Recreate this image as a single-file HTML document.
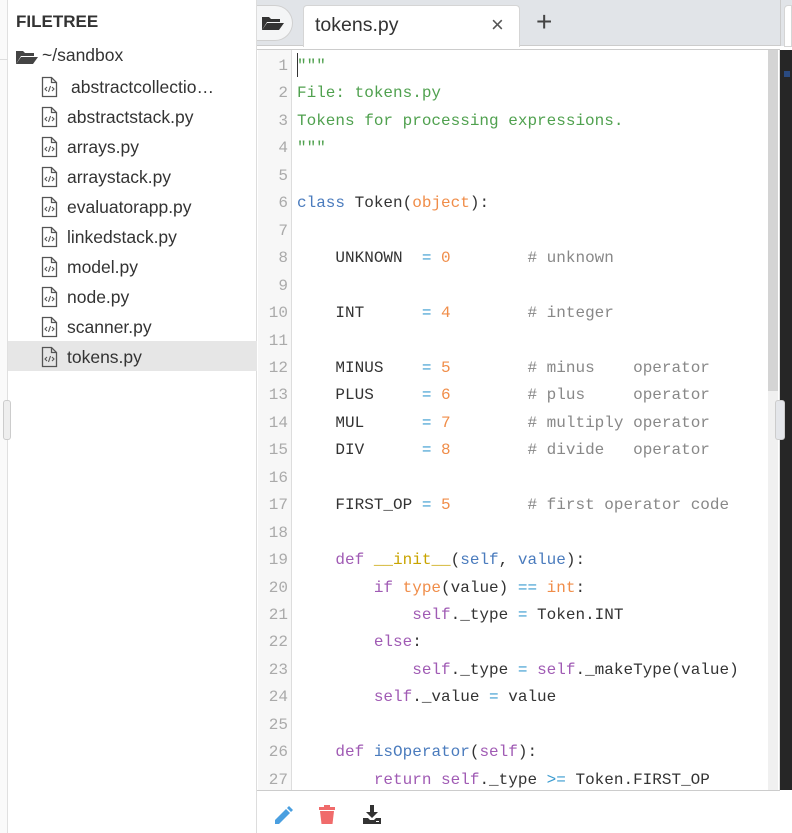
<!DOCTYPE html>
<html><head><meta charset="utf-8">
<style>
*{margin:0;padding:0;box-sizing:border-box}
body{width:792px;height:833px;overflow:hidden;background:#fff;font-family:"Liberation Sans",sans-serif;position:relative}
.abs{position:absolute}
#side{left:0;top:0;width:257px;height:833px;background:#fff;border-right:1px solid #ddd}
#leftstrip{left:0;top:0;width:8px;height:833px;background:#fafafa;border-right:1px solid #e0e0e0}
.ft{left:16px;top:12px;font-weight:bold;font-size:17px;color:#333}
.row{left:8px;width:249px;height:30px;font-size:17.5px;color:#333;line-height:30px}
.row svg{position:absolute;left:33px;top:4px}
.row span{position:absolute;left:59px}
#tabbar{left:257px;top:0;width:523px;height:46px;background:#e1e4e8;border-bottom:1px solid #ccc}
.ln{position:absolute;left:258px;width:30px;text-align:right;color:#aaa;font-family:"Liberation Mono",monospace;font-size:16px;line-height:27.45px}
.cl{position:absolute;left:297px;white-space:pre;color:#333;font-family:"Liberation Mono",monospace;font-size:16px;line-height:27.45px}
.s{color:#50a14f}.k{color:#4a7bbd}.o{color:#f08d49}.c{color:#888}.p{color:#3a9bd0}.v{color:#a05bb4}.f{color:#c9a400}
</style></head><body>
<div class="abs" id="side"></div>
<div class="abs" id="leftstrip"></div>
<div class="abs" style="left:0;top:59px;width:8px;height:1px;background:#ddd"></div>
<div class="abs" style="left:3px;top:400px;width:8px;height:40px;border:1px solid #ccc;border-radius:3px;background:#eee"></div>
<div class="abs ft">FILETREE</div>
<svg class="abs" style="left:16px;top:49px" width="22" height="16" viewBox="0 0 22 16"><path d="M0 2h7l2 2h9v3H5L0 15z" fill="#444"/><path d="M5 8h17l-5 7H0z" fill="#444"/></svg>
<div class="abs" style="left:42px;top:45px;font-size:17.5px;color:#333">~/sandbox</div>
<div id="rows"></div>
<div class="abs" style="left:8px;top:341px;width:249px;height:30px;background:#e6e6e6"></div>
<script>
var files=["abstractcollectio…","abstractstack.py","arrays.py","arraystack.py","evaluatorapp.py","linkedstack.py","model.py","node.py","scanner.py","tokens.py"];
var h="";
files.forEach(function(f,i){var t=72+i*30;
h+='<div class="abs row" style="top:'+t+'px;z-index:2"><svg width="17" height="22" viewBox="0 0 17 22"><path d="M1.5 1.5h9l5 5v14h-14z" fill="none" stroke="#555" stroke-width="1.3"/><path d="M10.5 1.5v5h5" fill="none" stroke="#555" stroke-width="1.3"/><path d="M6 11l-2 2 2 2M11 11l2 2-2 2M9.5 10l-2 6" fill="none" stroke="#555" stroke-width="1.1"/></svg><span'+(i==0?' style="left:63px"':'')+'>'+f+'</span></div>';});
document.getElementById("rows").innerHTML=h;
</script>
<div class="abs" id="tabbar"></div>
<div class="abs" style="left:257px;top:5px;width:36px;height:36px;border-radius:0 18px 18px 0;background:#f4f5f6;border:1px solid #d0d0d0;border-left:none"></div>
<svg class="abs" style="left:262px;top:16px" width="22" height="15" viewBox="0 0 22 15"><path d="M0 1h7l2 2h9v3H5L0 14z" fill="#333"/><path d="M5 7h17l-5 7H0z" fill="#333"/></svg>
<div class="abs" style="left:303px;top:5px;width:217px;height:42px;background:#fff;border:1px solid #d5d5d5;border-bottom:none;border-radius:4px 4px 0 0"></div>
<div class="abs" style="left:315px;top:14px;font-size:19.5px;color:#333">tokens.py</div>
<div class="abs" style="left:491px;top:12px;font-size:22px;color:#555">×</div>
<div class="abs" style="left:536px;top:6px;font-size:28px;color:#444;font-weight:300">+</div>
<div class="abs" style="left:780px;top:0;width:12px;height:46px;background:#e1e4e8;border-left:1px solid #ccc"></div>
<div class="abs" style="left:784px;top:5px;width:8px;height:42px;background:#fff;border:1px solid #d5d5d5;border-radius:4px 0 0 0"></div>
<div class="abs" style="left:257px;top:49px;width:523px;height:741px;border-top:1px solid #ccc"></div>
<div class="abs" style="left:258px;top:50px;width:34px;height:740px;background:#f7f7f7;border-right:1px solid #ddd"></div>
<div class="abs" style="left:768px;top:50px;width:10px;height:740px;background:#f0f0f0"></div>
<div class="abs" style="left:768px;top:50px;width:10px;height:341px;background:#d4d4d4"></div>
<div class="abs" style="left:779px;top:50px;width:1px;height:783px;background:#ddd"></div>
<div class="abs" style="left:780px;top:50px;width:12px;height:740px;background:#262626"></div>
<div class="abs" style="left:784px;top:71px;width:6px;height:6px;background:#2a4a80"></div>
<div class="abs" style="left:775px;top:400px;width:10px;height:40px;border:1px solid #ccc;border-radius:3px;background:#e4e6ea"></div>
<div class="abs" style="left:297px;top:53px;width:1px;height:24px;background:#333"></div>
<div id="codebox"></div>
<script>
var L=[
'<span class="s">"""</span>',
'<span class="s">File: tokens.py</span>',
'<span class="s">Tokens for processing expressions.</span>',
'<span class="s">"""</span>',
'',
'<span class="k">class</span> Token(<span class="o">object</span>):',
'',
'    UNKNOWN  <span class="p">=</span> <span class="o">0</span>        <span class="c"># unknown</span>',
'',
'    INT      <span class="p">=</span> <span class="o">4</span>        <span class="c"># integer</span>',
'',
'    MINUS    <span class="p">=</span> <span class="o">5</span>        <span class="c"># minus    operator</span>',
'    PLUS     <span class="p">=</span> <span class="o">6</span>        <span class="c"># plus     operator</span>',
'    MUL      <span class="p">=</span> <span class="o">7</span>        <span class="c"># multiply operator</span>',
'    DIV      <span class="p">=</span> <span class="o">8</span>        <span class="c"># divide   operator</span>',
'',
'    FIRST_OP <span class="p">=</span> <span class="o">5</span>        <span class="c"># first operator code</span>',
'',
'    <span class="v">def</span> <span class="f">__init__</span>(<span class="k">self</span>, <span class="k">value</span>):',
'        <span class="v">if</span> <span class="o">type</span>(value) <span class="p">==</span> <span class="o">int</span>:',
'            <span class="v">self</span>._type <span class="p">=</span> Token.INT',
'        <span class="v">else</span>:',
'            <span class="v">self</span>._type <span class="p">=</span> <span class="v">self</span>._makeType(value)',
'        <span class="v">self</span>._value <span class="p">=</span> value',
'',
'    <span class="v">def</span> <span class="k">isOperator</span>(<span class="v">self</span>):',
'        <span class="v">return</span> <span class="v">self</span>._type <span class="p">&gt;=</span> Token.FIRST_OP'];
var h="";
L.forEach(function(s,i){var t=53+i*27.45;
h+='<div class="ln" style="top:'+t+'px">'+(i+1)+'</div><div class="cl" style="top:'+t+'px">'+s+'</div>';});
document.getElementById("codebox").innerHTML=h;
</script>
<div class="abs" style="left:257px;top:790px;width:523px;height:43px;background:#fff;border-top:1px solid #ccc"></div>
<svg class="abs" style="left:273px;top:806px" width="20" height="20" viewBox="0 0 20 20"><path d="M2 14L13 3l4 4L6 18H2z" fill="#4a9fe0"/><path d="M14 2l2-2 4 4-2 2z" fill="#4a9fe0"/></svg>
<svg class="abs" style="left:318px;top:805px" width="20" height="20" viewBox="0 0 20 20"><rect x="1" y="2" width="16" height="3" fill="#f06b6b"/><rect x="6" y="0" width="6" height="2" fill="#f06b6b"/><path d="M2 6h14l-1.5 13h-11z" fill="#f06b6b"/></svg>
<svg class="abs" style="left:363px;top:805px" width="20" height="20" viewBox="0 0 20 20"><path d="M7 0h4v7h4l-6 6-6-6h4z" fill="#333"/><path d="M0 13h5l2 2h4l2-2h5v6H0z" fill="#333"/><rect x="13" y="16" width="3" height="1" fill="#fff"/></svg>
</body></html>
